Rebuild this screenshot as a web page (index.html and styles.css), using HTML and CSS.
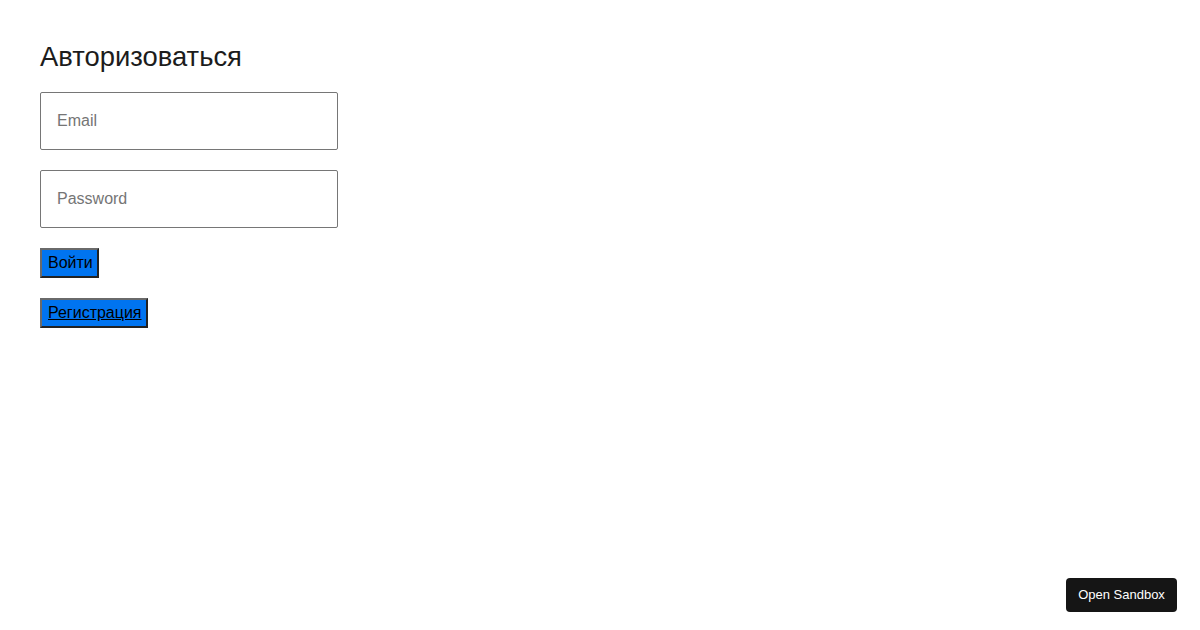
FILE: index.html
```html
<!DOCTYPE html>
<html lang="ru">
<head>
<meta charset="utf-8">
<title>Авторизоваться</title>
<link rel="stylesheet" href="styles.css">
</head>
<body>
<main class="auth">
  <h1 class="auth-title">Авторизоваться</h1>
  <form class="auth-form">
    <input class="auth-input" type="email" placeholder="Email">
    <input class="auth-input" type="password" placeholder="Password">
    <div class="auth-row"><button class="auth-btn" type="button">Войти</button></div>
    <div class="auth-row"><button class="auth-btn auth-link" type="button">Регистрация</button></div>
  </form>
</main>
<button class="sandbox-btn" type="button">Open Sandbox</button>
</body>
</html>
```

FILE: styles.css
```css
html, body {
  margin: 0;
  background: #fff;
  font-family: "Liberation Sans", Arial, sans-serif;
}
.auth {
  padding: 40px;
}
.auth-title {
  margin: 0 0 18px;
  font-size: 27.4px;
  line-height: 34px;
  font-weight: 400;
  color: #1c1c1c;
}
.auth-form {
  display: flex;
  flex-direction: column;
  gap: 20px;
  align-items: flex-start;
}
.auth-input {
  box-sizing: border-box;
  width: 298px;
  height: 58px;
  padding: 0 16px;
  border: 1px solid #767676;
  border-radius: 2px;
  font-family: "Liberation Sans", Arial, sans-serif;
  font-size: 16px;
  color: #111;
  outline: none;
}
.auth-input::placeholder {
  color: #757575;
}
.auth-row {
  display: flex;
}
.auth-btn {
  box-sizing: border-box;
  height: 30px;
  padding: 0 4px 0 6px;
  background: #0074f0;
  border: 2px solid #6a6a6a;
  border-right-color: #222;
  border-bottom-color: #222;
  font-family: "Liberation Sans", Arial, sans-serif;
  font-size: 16px;
  color: #000;
  cursor: pointer;
}
.auth-link {
  text-decoration: underline;
}
.sandbox-btn {
  position: fixed;
  right: 23px;
  bottom: 18px;
  width: 111px;
  height: 34px;
  padding: 0 0 2px;
  background: #151515;
  color: #fff;
  border: none;
  border-radius: 4px;
  font-family: "Liberation Sans", Arial, sans-serif;
  font-size: 13px;
  cursor: pointer;
}
```
